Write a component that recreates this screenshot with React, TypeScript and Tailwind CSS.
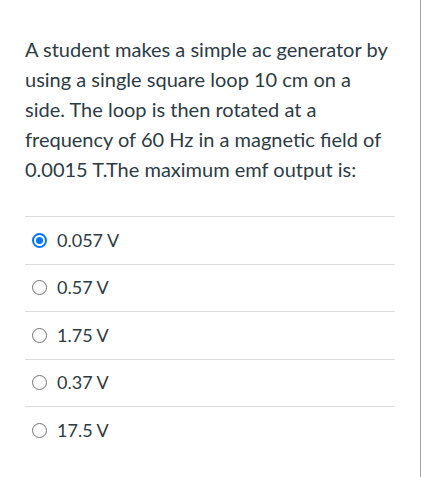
import React from "react";

const options = ["0.057 V", "0.57 V", "1.75 V", "0.37 V", "17.5 V"];

export default function App() {
  return (
    <div
      className="w-[421px] h-[477px] bg-white border-r border-[#a6a6a6] text-[#2d3b45]"
      style={{ fontFamily: "Lato, 'Noto Sans', sans-serif" }}
    >
      <div className="pl-[25px] pt-[34px] w-[395px]">
        <p className="text-[20px] leading-[30px]">
          A student makes a simple ac generator by using a single square loop 10 cm on a side. The loop is then rotated at a frequency of 60 Hz in a magnetic field of 0.0015 T.The maximum emf output is:
        </p>
        <div className="mt-[32px]">
          {options.map((o, i) => (
            <label
              key={o}
              className="flex items-center h-[47.5px] border-t border-[#dcdcdc] pl-[7px] gap-[10px] text-[18px]"
            >
              {i === 0 ? (
                <span className="w-[15px] h-[15px] rounded-full border-2 border-[#0075ff] flex items-center justify-center">
                  <span className="w-[7px] h-[7px] rounded-full bg-[#0075ff]" />
                </span>
              ) : (
                <span className="w-[15px] h-[15px] rounded-full border-[1.5px] border-[#767676]" />
              )}
              <span>{o}</span>
            </label>
          ))}
        </div>
      </div>
    </div>
  );
}
